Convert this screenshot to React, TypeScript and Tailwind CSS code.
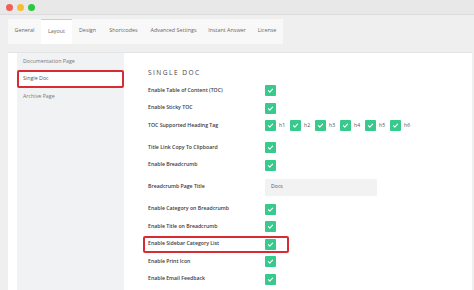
import React from 'react';

const tabs = [
  { name: 'General', w: 'w-[33px]' },
  { name: 'Layout', w: 'w-[31px]' },
  { name: 'Design', w: 'w-[31px]' },
  { name: 'Shortcodes', w: 'w-[41px]' },
  { name: 'Advanced Settings', w: 'w-[59px]' },
  { name: 'Instant Answer', w: 'w-[48px]' },
  { name: 'License', w: 'w-[32px]' },
];

type Row =
  | { label: string; kind: 'check'; boxed?: boolean }
  | { label: string; kind: 'tags' }
  | { label: string; kind: 'input'; value: string };

const rows: Row[] = [
  { label: 'Enable Table of Content (TOC)', kind: 'check' },
  { label: 'Enable Sticky TOC', kind: 'check' },
  { label: 'TOC Supported Heading Tag', kind: 'tags' },
  { label: 'Title Link Copy To Clipboard', kind: 'check' },
  { label: 'Enable Breadcrumb', kind: 'check' },
  { label: 'Breadcrumb Page Title', kind: 'input', value: 'Docs' },
  { label: 'Enable Category on Breadcrumb', kind: 'check' },
  { label: 'Enable Title on Breadcrumb', kind: 'check' },
  { label: 'Enable Sidebar Category List', kind: 'check', boxed: true },
  { label: 'Enable Print Icon', kind: 'check' },
  { label: 'Enable Email Feedback', kind: 'check' },
];

function Check() {
  return (
    <span className="flex h-[11px] w-[11px] items-center justify-center rounded-[1px] bg-[#38c98c]">
      <svg width="7" height="7" viewBox="0 0 10 10" fill="none">
        <path d="M2 5.2l2 2 4-4.2" stroke="#fff" strokeWidth="1.6" strokeLinecap="round" strokeLinejoin="round" />
      </svg>
    </span>
  );
}

export default function App() {
  return (
    <div
      className="h-[290px] w-[474px] overflow-hidden bg-[#efefef]"
      style={{ fontFamily: '"Open Sans", "Noto Sans", sans-serif' }}
    >
      {/* title bar */}
      <div className="flex h-[15px] items-center gap-[4px] border-b border-[#dcdcdc] bg-[#e8e8e8] pl-[6px]">
        <span className="h-[7px] w-[7px] rounded-full bg-[#f05f57]" />
        <span className="h-[7px] w-[7px] rounded-full bg-[#f6bd2f]" />
        <span className="h-[7px] w-[7px] rounded-full bg-[#2fc840]" />
      </div>

      <div className="pl-[8px] pr-[2px] pt-[4px]">
        {/* tabs */}
        <div className="flex h-[25px] w-[275px] items-stretch bg-[#f8f8f8] text-[5.4px] text-[#666]">
          {tabs.map((t) => (
            <div
              key={t.name}
              className={
                t.w +
                (t.name === 'Layout'
                  ? ' flex items-center justify-center whitespace-nowrap border-t border-[#b9d8cf] bg-white pb-[2px]'
                  : ' flex items-center justify-center whitespace-nowrap pb-[2px]')
              }
            >
              {t.name}
            </div>
          ))}
        </div>

        {/* panel */}
        <div className="mt-[8px] flex h-[240px] border-t border-[#e4e4e4] bg-white pl-[9px]">
          <aside className="w-[107px] shrink-0 bg-[#f1f2f4] pt-[1px] text-[5.3px] text-[#777]">
            <div className="flex h-[16px] items-center pl-[6px]">Documentation Page</div>
            <div className="flex h-[18px] items-center rounded-[2px] border-2 border-[#d92b33] bg-white pl-[4px] text-[#555]">
              Single Doc
            </div>
            <div className="flex h-[18px] items-center pl-[6px]">Archive Page</div>
          </aside>

          <main className="flex-1 pl-[24px] pt-[15px]">
            <h2 className="h-[14px] text-[6.6px] leading-[10px] tracking-[0.22em] text-[#444]">SINGLE DOC</h2>
            <div className="flex flex-col text-[5.2px] font-semibold text-[#3a3a3a]">
              {rows.map((r) => {
                const extra =
                  r.kind === 'tags' ? ' mb-[4.5px]' : r.kind === 'input' ? ' my-[4.5px]' : '';
                const boxed = r.kind === 'check' && r.boxed;
                return (
                  <div
                    key={r.label}
                    className={
                      'flex h-[17.5px] w-[146px] items-center' +
                      extra +
                      (boxed ? ' -ml-[5px] rounded-[2px] border-2 border-[#d92b33] pl-[3px]' : '')
                    }
                  >
                    <div className="w-[117px] shrink-0">{r.label}</div>
                    {r.kind === 'check' && <Check />}
                    {r.kind === 'tags' && (
                      <div className="flex items-center">
                        {['h1', 'h2', 'h3', 'h4', 'h5', 'h6'].map((h) => (
                          <div key={h} className="flex w-[25px] items-center gap-[3px] font-normal text-[#555]">
                            <Check />
                            <span>{h}</span>
                          </div>
                        ))}
                      </div>
                    )}
                    {r.kind === 'input' && (
                      <div className="flex h-[17px] w-[112px] shrink-0 items-center rounded-[1px] bg-[#f2f2f2] pl-[6px] font-normal text-[#555]">
                        {r.value}
                      </div>
                    )}
                  </div>
                );
              })}
            </div>
          </main>
        </div>
      </div>
    </div>
  );
}
